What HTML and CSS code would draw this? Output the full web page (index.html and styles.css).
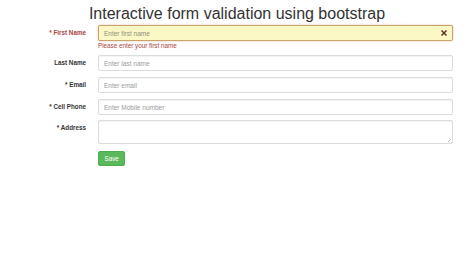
FILE: index.html
```html
<!DOCTYPE html>
<html>
<head>
<meta charset="utf-8">
<link rel="stylesheet" href="styles.css">
</head>
<body>
<h1 class="title">Interactive form validation using bootstrap</h1>
<form class="form">
  <div class="row row-error">
    <label class="label">* First Name</label>
    <div class="field">
      <div class="input-wrap">
        <input class="input input-error" type="text" placeholder="Enter first name">
        <svg class="feedback" width="6" height="6" viewBox="0 0 6 6"><path d="M1 1L5 5M5 1L1 5" stroke="#5e3226" stroke-width="1.5" stroke-linecap="square"/></svg>
      </div>
      <div class="help">Please enter your first name</div>
    </div>
  </div>
  <div class="row">
    <label class="label">Last Name</label>
    <div class="field"><input class="input" type="text" placeholder="Enter last name"></div>
  </div>
  <div class="row">
    <label class="label">* Email</label>
    <div class="field"><input class="input" type="text" placeholder="Enter email"></div>
  </div>
  <div class="row row-phone">
    <label class="label">* Cell Phone</label>
    <div class="field"><input class="input" type="text" placeholder="Enter Mobile number"></div>
  </div>
  <div class="row row-address">
    <label class="label">* Address</label>
    <div class="field input-wrap textarea-wrap"><textarea class="input textarea"></textarea></div>
  </div>
  <div class="row">
    <div class="label"></div>
    <div class="field"><button class="btn" type="button">Save</button></div>
  </div>
</form>
</body>
</html>
```
FILE: styles.css
```css
html, body {
  margin: 0;
  padding: 0;
  background: #fff;
  font-family: "Liberation Sans", Arial, sans-serif;
  color: #333;
}
.title {
  margin: 0;
  padding-top: 2px;
  height: 23px;
  line-height: 23px;
  font-size: 16px;
  font-weight: normal;
  text-align: center;
  color: #333;
}
.form {
  display: flex;
  flex-direction: column;
}
.row {
  display: flex;
  gap: 12px;
  margin-bottom: 6px;
}
.row-phone { margin-bottom: 5px; }
.row-address { margin-bottom: 7px; }
.label {
  width: 86px;
  flex: none;
  text-align: right;
  font-weight: bold;
  font-size: 6.3px;
  line-height: 9px;
  padding-top: 3px;
  color: #333;
}
.row-error .label { color: #a94442; }
.field {
  width: 355px;
  flex: none;
}
.input-wrap {
  position: relative;
}
.input {
  display: block;
  box-sizing: border-box;
  width: 355px;
  height: 16px;
  margin: 0;
  padding: 0 5px;
  border: 1px solid #dcdcdc;
  border-radius: 2px;
  background: #fff;
  box-shadow: inset 0 1px 1px rgba(0,0,0,0.05);
  font-family: "Liberation Sans", Arial, sans-serif;
  font-size: 6.5px;
  color: #555;
  outline: none;
}
.input::placeholder { color: #9a9a9a; }
.input-error {
  background: #fbf8c6;
  border-color: #c9a36b;
  box-shadow: 0 0 2px rgba(190, 140, 80, 0.6);
}
.input-error::placeholder { color: #8f8f7a; }
.feedback {
  position: absolute;
  right: 6px;
  top: 5px;
}
.help {
  margin-top: 1px;
  font-size: 6.3px;
  line-height: 7px;
  color: #a94442;
  height: 7px;
}
.textarea {
  height: 24px;
  padding: 3px 5px;
  resize: none;
}
.textarea-wrap::after {
  content: "";
  position: absolute;
  right: 2px;
  bottom: 2px;
  width: 3px;
  height: 3px;
  background: linear-gradient(135deg, transparent 45%, #bbb 45%, #bbb 60%, transparent 60%);
}
.btn {
  display: block;
  height: 15px;
  padding: 0 5.5px;
  margin: 0;
  border: 1px solid #4cae4c;
  border-radius: 2px;
  background: #5cb85c;
  color: #fff;
  font-family: "Liberation Sans", Arial, sans-serif;
  font-size: 6.3px;
  line-height: 13px;
}
```
